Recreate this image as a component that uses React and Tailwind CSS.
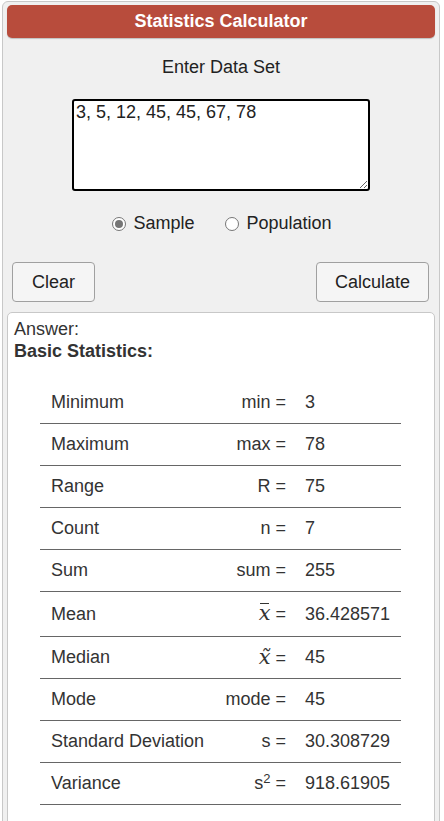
import React, { useState } from "react";

const rows = [
  { label: "Minimum", sym: "min", value: "3" },
  { label: "Maximum", sym: "max", value: "78" },
  { label: "Range", sym: "R", value: "75" },
  { label: "Count", sym: "n", value: "7" },
  { label: "Sum", sym: "sum", value: "255" },
  { label: "Mean", sym: "mean", value: "36.428571" },
  { label: "Median", sym: "median", value: "45" },
  { label: "Mode", sym: "mode", value: "45" },
  { label: "Standard Deviation", sym: "s", value: "30.308729" },
  { label: "Variance", sym: "s2", value: "918.61905" },
];

const Symbol = ({ sym }) => {
  if (sym === "mean") {
    return (
      <span className="relative inline-block italic text-[21px] leading-[20px]" style={{ fontFamily: '"DejaVu Serif", "Liberation Serif", serif' }}>
        <span className="absolute left-[1px] right-[1px] top-0 h-[1px] bg-[#333]" />
        x
      </span>
    );
  }
  if (sym === "median") {
    return (
      <span className="italic text-[21px] leading-[20px]" style={{ fontFamily: '"DejaVu Serif", "Liberation Serif", serif' }}>
        x̃
      </span>
    );
  }
  if (sym === "s2") {
    return (
      <span>
        s<sup className="text-[13px]">2</sup>
      </span>
    );
  }
  return <span>{sym}</span>;
};

const Radio = ({ checked, label, onClick }) => (
  <label className="flex items-center gap-[7px] cursor-pointer" onClick={onClick}>
    <span className="w-[14px] h-[14px] rounded-full border border-[#767676] bg-white flex items-center justify-center">
      {checked && <span className="w-[8px] h-[8px] rounded-full bg-[#767676]" />}
    </span>
    <span>{label}</span>
  </label>
);

const App = () => {
  const [mode, setMode] = useState("sample");
  const [data, setData] = useState("3, 5, 12, 45, 45, 67, 78");

  return (
    <div className="pt-[1px] pl-[2px] text-[18px] text-[#222]" style={{ fontFamily: '"Liberation Sans", Arial, sans-serif' }}>
      <div className="w-[438px] min-h-[830px] bg-[#f0f0f0] border border-[#c8c8c8] rounded-[6px] px-[4px] pt-[3px]">
        <div className="h-[33px] bg-[#b84c3c] rounded-[5px] flex items-center justify-center text-white font-bold text-[18px] shadow-[0_1px_1px_rgba(0,0,0,0.2)]">
          Statistics Calculator
        </div>

        <div className="text-center mt-[19px] leading-[20px]">Enter Data Set</div>

        <div className="flex justify-center mt-[22px]">
          <textarea
            value={data}
            onChange={(e) => setData(e.target.value)}
            className="w-[298px] h-[92px] border-2 border-black rounded-[3px] bg-white px-[2px] py-[1px] text-[18px] leading-[21px] text-[#222] focus:outline-none"
            style={{ fontFamily: '"Liberation Sans", Arial, sans-serif' }}
          />
        </div>

        <div className="flex justify-center gap-[31px] mt-[22px] leading-[21px] ml-[2px]">
          <Radio checked={mode === "sample"} label="Sample" onClick={() => setMode("sample")} />
          <Radio checked={mode === "population"} label="Population" onClick={() => setMode("population")} />
        </div>

        <div className="flex justify-between mt-[28px] pl-[5px] pr-[6px]">
          <button className="h-[40px] px-[19px] border border-[#a0a0a0] rounded-[4px] bg-[#f5f5f5] text-[18px]" onClick={() => setData("")}>
            Clear
          </button>
          <button className="h-[40px] px-[18px] border border-[#a0a0a0] rounded-[4px] bg-[#f5f5f5] text-[18px]">
            Calculate
          </button>
        </div>

        <div className="mt-[10px] bg-white border border-[#c8c8c8] rounded-[5px] px-[6px] pt-[5px] pb-[20px] text-[#333]">
          <div className="leading-[22px]">Answer:</div>
          <div className="leading-[22px] font-bold">Basic Statistics:</div>

          <div className="w-[361px] ml-[26px] mt-[20px]">
            {rows.map((r) => (
              <div
                key={r.label}
                className={`flex items-center border-b border-[#666] leading-[21px] ${r.sym === "mean" ? "h-[45px]" : "h-[42px]"}`}
              >
                <div className="flex-1 pl-[11px] whitespace-nowrap">{r.label}</div>
                <div className="w-[81px] text-right pr-[10px] whitespace-nowrap">
                  <Symbol sym={r.sym} /> =
                </div>
                <div className="w-[105px] pl-[9px]">{r.value}</div>
              </div>
            ))}
          </div>
        </div>
      </div>
    </div>
  );
};

export default App;
